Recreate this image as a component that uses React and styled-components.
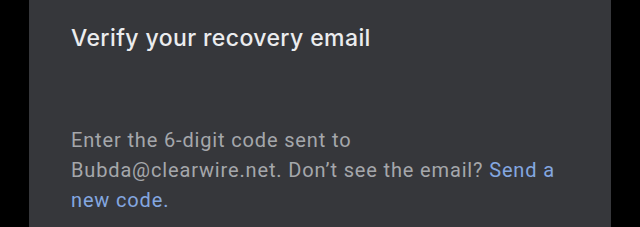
import React from 'react';
import styled, { createGlobalStyle } from 'styled-components';

const GlobalStyle = createGlobalStyle`
  html, body {
    margin: 0;
    padding: 0;
    background-color: #000;
  }
`;

const Page = styled.div`
  background-color: #000;
  height: 227px;
  overflow: hidden;
  padding: 0 29px;
`;

const Panel = styled.div`
  background-color: #36373b;
  box-sizing: border-box;
  height: 227px;
  padding: 24px 42px 0;
`;

const Title = styled.h2`
  color: #ebecee;
  font-family: Inter, "Open Sans", sans-serif;
  font-size: 23px;
  font-weight: 500;
  letter-spacing: 0.4px;
  line-height: 28px;
  margin: 0 0 73px;
`;

const Message = styled.p`
  color: #a5a7ab;
  font-family: Roboto, "Liberation Sans", sans-serif;
  font-size: 20px;
  letter-spacing: 0.85px;
  line-height: 30px;
  margin: 0;
`;

const Link = styled.a`
  color: #84a7e0;
  cursor: pointer;
  text-decoration: none;
`;

export default function App() {
  return (
    <Page>
      <GlobalStyle />
      <Panel>
        <Title>Verify your recovery email</Title>
        <Message>
          Enter the 6-digit code sent to<br />
          Bubda@clearwire.net. Don’t see the email?{' '}
          <Link>Send a new code.</Link>
        </Message>
      </Panel>
    </Page>
  );
}
